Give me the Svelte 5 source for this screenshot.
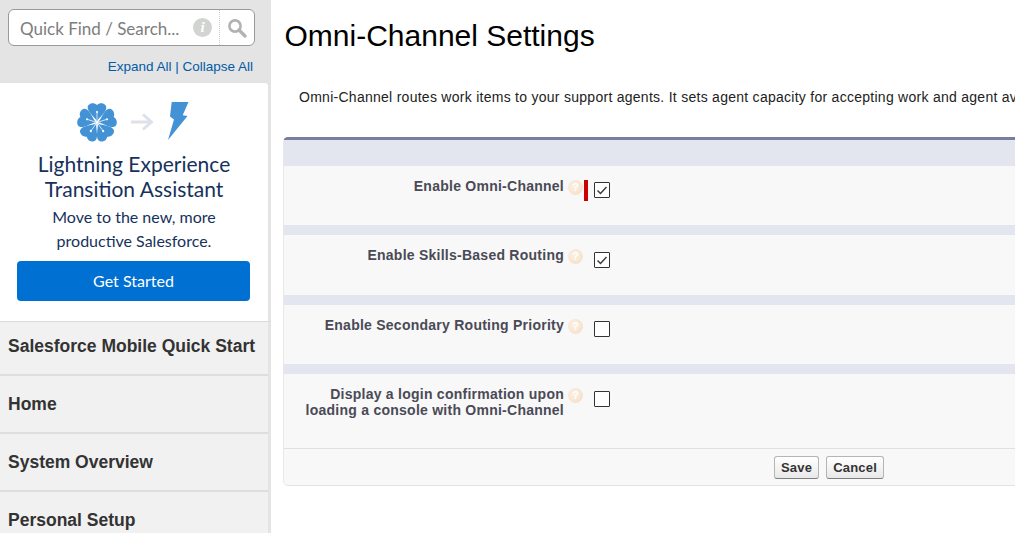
<script>
  const navItems = ['Salesforce Mobile Quick Start', 'Home', 'System Overview', 'Personal Setup'];
  const rows = [
    { label: ['Enable Omni-Channel'], checked: true, required: true, cls: 'r1' },
    { label: ['Enable Skills-Based Routing'], checked: true, cls: 'r2' },
    { label: ['Enable Secondary Routing Priority'], checked: false, cls: 'r3' },
    { label: ['Display a login confirmation upon', 'loading a console with Omni-Channel'], checked: false, cls: 'r4' }
  ];
  const petals = [0, 72, 144, 216, 288];
</script>

<div class="page">
  <aside class="sidebar">
    <div class="search-wrap">
      <div class="search">
        <span class="placeholder">Quick Find / Search...</span>
        <span class="info">i</span>
        <span class="search-btn">
          <svg width="20" height="20" viewBox="0 0 20 20">
            <circle cx="8" cy="8" r="5.6" fill="none" stroke="#b0b3b0" stroke-width="2.6" />
            <path d="M12 12l6 6" stroke="#b0b3b0" stroke-width="3.2" stroke-linecap="round" />
          </svg>
        </span>
      </div>
      <div class="expand"><span>Expand All</span> | <span>Collapse All</span></div>
    </div>

    <div class="promo">
      <div class="promo-icons">
        <svg class="flower" width="40" height="40" viewBox="-20 -20.5 40 40">
          {#each petals as a}
            <g transform="rotate({a})">
              <path d="M0 -1C-1 -3.5 -4 -6 -6.5 -9C-8.5 -11.5 -9.3 -13 -9.3 -15C-9.3 -18.7 -3.5 -20.8 0 -17.5C3.5 -20.8 9.3 -18.7 9.3 -15C9.3 -13 8.5 -11.5 6.5 -9C4 -6 1 -3.5 0 -1Z" fill="#4392d6" />
              <path d="M0 -1L0 -10" stroke="#fff" stroke-width="0.7" />
              <circle cx="0" cy="-10.5" r="1.1" fill="#fff" />
            </g>
          {/each}
        </svg>
        <svg class="arrow" width="24" height="20" viewBox="0 0 24 20">
          <path d="M1 10H21M13 2.5L21.5 10L13 17.5" fill="none" stroke="#dfe1ea" stroke-width="3" />
        </svg>
        <svg class="bolt" width="21" height="39" viewBox="0 0 21 39">
          <path d="M3.7 0H20.5L14.7 13.3L19.5 14L0 38L6 17.5L2 14.5Z" fill="#4392d6" />
        </svg>
      </div>
      <h2>Lightning Experience<br />Transition Assistant</h2>
      <p>Move to the new, more<br />productive Salesforce.</p>
      <div class="cta">Get Started</div>
    </div>

    <nav>
      {#each navItems as item}
        <div class="nav-item">{item}</div>
      {/each}
    </nav>
  </aside>

  <main>
    <h1>Omni-Channel Settings</h1>
    <p class="intro">Omni-Channel routes work items to your support agents. It sets agent capacity for accepting work and agent availability for receiving work.</p>

    <section class="panel">
      <div class="band top"></div>
      {#each rows as row}
        <div class="row {row.cls}">
          <div class="label">
            {#each row.label as line}<div>{line}</div>{/each}
          </div>
          <span class="help">?</span>
          <span class="req" class:on={row.required}></span>
          <span class="box">
            {#if row.checked}
              <svg width="14" height="14" viewBox="0 0 14 14">
                <path d="M2.5 7.5L5.5 10.5L11.5 4" fill="none" stroke="#3c3c3c" stroke-width="1.5" />
              </svg>
            {/if}
          </span>
        </div>
      {/each}
      <div class="buttons">
        <span class="btn">Save</span>
        <span class="btn">Cancel</span>
      </div>
    </section>
  </main>
</div>

<style>
  :global(body) {
    margin: 0;
    overflow: hidden;
    background: #fff;
  }
  .page {
    display: flex;
    width: 1015px;
    height: 533px;
    overflow: hidden;
    font-family: "Liberation Sans", Arial, sans-serif;
  }
  .sidebar {
    flex: 0 0 271px;
    width: 271px;
    height: 533px;
    background: #e4e4e4;
    overflow: hidden;
  }
  .search-wrap {
    height: 82px;
    padding: 9px 16px 0 8px;
    box-sizing: border-box;
  }
  .search {
    display: flex;
    align-items: center;
    height: 37px;
    box-sizing: border-box;
    background: #fff;
    border: 1px solid #999;
    border-radius: 6px;
    padding-left: 11px;
  }
  .placeholder {
    flex: 1;
    padding-top: 2px;
    font-family: Lato, sans-serif;
    font-size: 17px;
    color: #7d7d7d;
    white-space: nowrap;
  }
  .info {
    width: 19px;
    height: 19px;
    margin-right: 7px;
    border-radius: 50%;
    background: #d2d4d2;
    color: #fff;
    font: italic bold 15px/19px "Liberation Serif", serif;
    text-align: center;
  }
  .search-btn {
    display: flex;
    align-items: center;
    justify-content: center;
    width: 35px;
    height: 35px;
    border-left: 1px dotted #ccc;
    box-sizing: border-box;
  }
  .expand {
    margin-top: 12px;
    font-size: 13.5px;
    line-height: 17px;
    color: #015ba7;
    text-align: right;
    white-space: nowrap;
    padding-right: 2px;
  }
  .promo {
    width: 269px;
    height: 239px;
    box-sizing: border-box;
    background: #fff;
    border-radius: 0 4px 0 0;
    border-top: 1px solid #dfe1e6;
    border-right: 1px solid #e2e3ea;
    text-align: center;
    color: #16325c;
    font-family: Lato, sans-serif;
  }
  .promo-icons {
    display: flex;
    align-items: center;
    height: 39px;
    margin-top: 19px;
    padding-left: 77px;
  }
  .arrow {
    margin: 0 14px 0 13px;
  }
  .promo h2 {
    margin: 10px 0 0;
    font-size: 21px;
    font-weight: 400;
    line-height: 25px;
  }
  .promo p {
    margin: 4px 0 0;
    font-size: 16px;
    line-height: 24px;
  }
  .cta {
    width: 233px;
    height: 40px;
    margin: 8px 0 0 17px;
    border-radius: 4px;
    background: #0070d2;
    color: #fff;
    font-size: 16px;
    line-height: 40px;
  }
  nav {
    border-top: 1px solid #d9d9e0;
  }
  .nav-item {
    width: 268px;
    height: 58px;
    box-sizing: border-box;
    padding: 18px 0 0 8px;
    background: #f1f1f1;
    border-bottom: 2px solid #dedede;
    font-size: 17.5px;
    font-weight: 700;
    line-height: 21px;
    color: #333;
    white-space: nowrap;
  }
  .nav-item:first-child {
    height: 54px;
    padding-top: 14px;
  }
  main {
    flex: 1;
    min-width: 0;
    padding: 0 0 0 12px;
    overflow: hidden;
  }
  h1 {
    margin: 18px 0 0 1.5px;
    font-size: 30px;
    font-weight: 400;
    line-height: 35px;
    color: #000;
    white-space: nowrap;
  }
  .intro {
    margin: 36px 0 0 16px;
    font-size: 14px;
    line-height: 16px;
    letter-spacing: 0.27px;
    color: #222;
    white-space: nowrap;
  }
  .panel {
    width: 760px;
    height: 349px;
    margin-top: 32px;
    box-sizing: border-box;
    background: #f8f8f8;
    border-top: 3px solid #777f9c;
    border-left: 1px solid #e8e8e8;
    border-bottom: 1px solid #e3e3e3;
    border-radius: 5px 0 0 5px;
  }
  .band.top {
    height: 26px;
    background: #e3e6ef;
  }
  .row {
    display: flex;
    align-items: flex-start;
    box-sizing: border-box;
    border-bottom: 10px solid #e3e6ef;
  }
  .r1 { height: 69px; }
  .r2 { height: 70px; }
  .r3 { height: 69px; }
  .r4 { height: 75px; border-bottom: 1px solid #e0e0e0; }
  .label {
    width: 280px;
    margin-top: 12px;
    text-align: right;
    font-size: 14px;
    font-weight: 700;
    line-height: 16px;
    letter-spacing: 0.25px;
    color: #4a4a56;
    white-space: nowrap;
  }
  .help {
    width: 15px;
    height: 15px;
    margin: 14px 0 0 4px;
    border-radius: 50%;
    background: radial-gradient(circle at 40% 40%, #fcf1e5, #f2dcc2);
    color: #fff;
    font-size: 11px;
    font-weight: 700;
    line-height: 15px;
    text-align: center;
  }
  .req {
    width: 4px;
    height: 21px;
    margin: 14px 0 0 1px;
  }
  .req.on {
    background: #c00;
  }
  .box {
    width: 16px;
    height: 16px;
    margin: 16px 0 0 6px;
    box-sizing: border-box;
    border: 1px solid #333;
    border-radius: 1px;
    background: #fff;
    display: block;
  }
  .r2 .box, .r4 .box {
    margin-top: 17px;
  }
  .box svg {
    display: block;
  }
  .buttons {
    display: flex;
    gap: 7px;
    margin: 7px 0 0 490px;
  }
  .btn {
    height: 23px;
    box-sizing: border-box;
    padding: 0 6px;
    border: 1px solid #b5b5b5;
    border-bottom-color: #7f7f7f;
    border-radius: 3px;
    background: linear-gradient(#fff, #e8e8e8);
    font-size: 13px;
    font-weight: 700;
    line-height: 21px;
    letter-spacing: 0.2px;
    color: #333;
  }
</style>
